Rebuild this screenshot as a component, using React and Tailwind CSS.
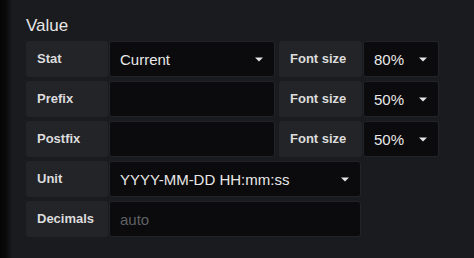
const Caret = () => (
  <svg width="8" height="5" viewBox="0 0 8 5" className="shrink-0">
    <path d="M0 0.5 L8 0.5 L4 4.5 Z" fill="#e4e4e4" />
  </svg>
);

const Label = ({ children, w = "w-[83px]" }) => (
  <div className={`${w} h-9 shrink-0 rounded-[3px] bg-[#232428] px-[11px] flex items-center text-[13px] font-bold text-[#dcdcdd]`}>
    {children}
  </div>
);

const Field = ({ w, value, placeholder, select }) => (
  <div className={`${w} h-9 shrink-0 rounded-[3px] border border-[#232427] bg-[#0b0b0d] pl-[10px] pr-[11px] flex items-center justify-between`}>
    {value ? (
      <span className="pt-[3px] text-[15px] text-[#e8e8e8]">{value}</span>
    ) : (
      <span className="pt-[3px] text-[15px] text-[#5f6064]">{placeholder}</span>
    )}
    {select && <Caret />}
  </div>
);

export default function App() {
  return (
    <div
      className="w-[474px] h-[258px] flex bg-[#1a1b1e] overflow-hidden"
      style={{ fontFamily: '"Liberation Sans", Arial, sans-serif' }}
    >
      <div className="w-[12px] h-full shrink-0 bg-gradient-to-r from-[#050506] via-[#0a0a0b] to-[#1a1b1e]" />
      <div className="pl-[14px] pt-[17px]">
        <h2 className="text-[17px] leading-[17px] text-[#e6e6e6] mb-[7px]">Value</h2>
        <div className="flex flex-col gap-1">
          <div className="flex gap-[1px]">
            <Label w="w-[82px]">Stat</Label>
            <Field w="w-[166px]" value="Current" select />
            <div className="w-[2px]" />
            <Label>Font size</Label>
            <Field w="w-[76px]" value="80%" select />
          </div>
          <div className="flex gap-[1px]">
            <Label w="w-[82px]">Prefix</Label>
            <Field w="w-[166px]" />
            <div className="w-[2px]" />
            <Label>Font size</Label>
            <Field w="w-[76px]" value="50%" select />
          </div>
          <div className="flex gap-[1px]">
            <Label w="w-[82px]">Postfix</Label>
            <Field w="w-[166px]" />
            <div className="w-[2px]" />
            <Label>Font size</Label>
            <Field w="w-[76px]" value="50%" select />
          </div>
          <div className="flex gap-[1px]">
            <Label w="w-[82px]">Unit</Label>
            <Field w="w-[252px]" value="YYYY-MM-DD HH:mm:ss" select />
          </div>
          <div className="flex gap-[1px]">
            <Label w="w-[82px]">Decimals</Label>
            <Field w="w-[252px]" placeholder="auto" />
          </div>
        </div>
      </div>
    </div>
  );
}
